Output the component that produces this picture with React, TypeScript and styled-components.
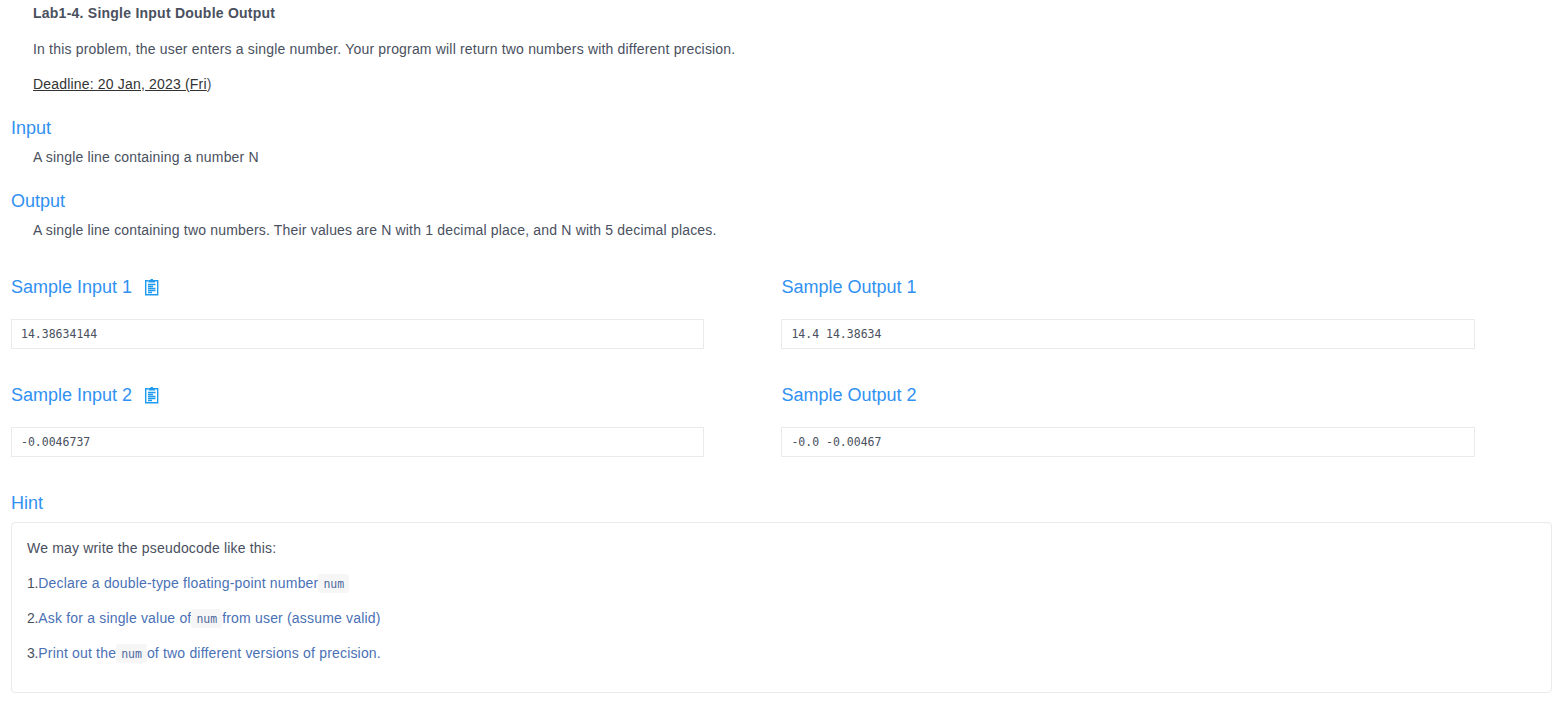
import { createGlobalStyle } from 'styled-components';
import styled from 'styled-components';

const GlobalStyle = createGlobalStyle`
  html, body {
    margin: 0;
    padding: 0;
    background: #fff;
  }
  body {
    font-family: 'Liberation Sans', Arial, sans-serif;
    font-size: 14px;
    line-height: 1.5;
    letter-spacing: 0.18px;
    color: #495060;
  }
`;

const Page = styled.div`
  width: 1541px;
  padding: 3px 0 0 11px;
`;

const Body = styled.div`
  padding-left: 22px;
`;

const Intro = styled.div`
  padding-left: 22px;
  margin-bottom: 20px;
`;

const Paragraph = styled.p`
  margin: 0 0 14px;
  height: 21px;

  &:first-child {
    margin-bottom: 15px;
  }
`;

const Title = styled.strong`
  font-weight: bold;
  font-size: 14px;
  letter-spacing: 0.24px;
`;

const Deadline = styled.span`
  color: #333;
  text-decoration: underline;
`;

const Heading = styled.h2`
  margin: 0;
  font-size: 18px;
  font-weight: normal;
  letter-spacing: 0;
  line-height: 27px;
  color: #3091f2;
  display: flex;
  align-items: center;
  gap: 12px;
`;

const HintHeading = styled(Heading)`
  margin-top: 33px;
`;

const Section = styled.section`
  margin-bottom: 20px;

  ${Heading} {
    margin-bottom: 5px;
  }
`;

const SampleGrid = styled.div`
  display: grid;
  grid-template-columns: 770.4px 1fr;
  row-gap: 33px;
  margin-top: 33px;
`;

const SampleBox = styled.pre`
  margin: 18px 0 0;
  width: 693.4px;
  box-sizing: border-box;
  height: 30px;
  padding: 0 9px;
  border: 1px solid #e9eaec;
  font-family: 'DejaVu Sans Mono', monospace;
  font-size: 11.5px;
  letter-spacing: 0;
  line-height: 28px;
  color: #495060;
`;

const HintCard = styled.div`
  margin-top: 5px;
  box-sizing: border-box;
  height: 171px;
  padding: 15px;
  border: 1px solid #e9eaec;
  border-radius: 4px;
`;

const HintLine = styled.p`
  margin: 0 0 14px;
  height: 21px;
`;

const Marker = styled.span`
  letter-spacing: -0.2px;
`;

const HintText = styled.span`
  color: #4a71b5;
`;

const InlineCode = styled.code`
  font-family: 'DejaVu Sans Mono', monospace;
  font-size: 11.5px;
  letter-spacing: 0;
  padding: 2.5px 5px;
  vertical-align: 1px;
  background: #f6f6f6;
  border-radius: 3px;
  color: #4e6a9e;
`;

function ClipboardIcon() {
  return (
    <svg width="16" height="18" viewBox="0 1 16 18" fill="none" stroke="#1e9bf0" strokeWidth="1.4">
      <path d="M4.5 2.7H1.7v14h12v-14H11" />
      <path d="M4.5 2h6.5v2.5H4.5z" fill="#1e9bf0" stroke="none" />
      <path d="M6.5 0.5h2.5v2H6.5z" fill="#1e9bf0" stroke="none" />
      <path d="M4 6.5h7.5M4 8.5h5M4 10.5h7.5M4 12.5h7.5M4 14.5h4" />
    </svg>
  );
}

function Sample({ label, value, copy }: { label: string; value: string; copy?: boolean }) {
  return (
    <div>
      <Heading>
        {label}
        {copy && <ClipboardIcon />}
      </Heading>
      <SampleBox>{value}</SampleBox>
    </div>
  );
}

export default function App() {
  return (
    <Page>
      <GlobalStyle />
      <Intro>
        <Paragraph>
          <Title>Lab1-4. Single Input Double Output</Title>
        </Paragraph>
        <Paragraph>
          In this problem, the user enters a single number. Your program will return two numbers with different precision.
        </Paragraph>
        <Paragraph>
          <Deadline>Deadline: 20 Jan, 2023 (Fri</Deadline>)
        </Paragraph>
      </Intro>

      <Section>
        <Heading>Input</Heading>
        <Body>A single line containing a number N</Body>
      </Section>

      <Section>
        <Heading>Output</Heading>
        <Body>A single line containing two numbers. Their values are N with 1 decimal place, and N with 5 decimal places.</Body>
      </Section>

      <SampleGrid>
        <Sample label="Sample Input 1" value="14.38634144" copy />
        <Sample label="Sample Output 1" value="14.4 14.38634" />
        <Sample label="Sample Input 2" value="-0.0046737" copy />
        <Sample label="Sample Output 2" value="-0.0 -0.00467" />
      </SampleGrid>

      <HintHeading>Hint</HintHeading>
      <HintCard>
        <HintLine>We may write the pseudocode like this:</HintLine>
        <HintLine>
          <Marker>1.</Marker>
          <HintText>Declare a double-type floating-point number</HintText>
          <InlineCode>num</InlineCode>
        </HintLine>
        <HintLine>
          <Marker>2.</Marker>
          <HintText>Ask for a single value of</HintText>
          <InlineCode>num</InlineCode>
          <HintText>from user (assume valid)</HintText>
        </HintLine>
        <HintLine>
          <Marker>3.</Marker>
          <HintText>Print out the</HintText>
          <InlineCode>num</InlineCode>
          <HintText>of two different versions of precision.</HintText>
        </HintLine>
      </HintCard>
    </Page>
  );
}
